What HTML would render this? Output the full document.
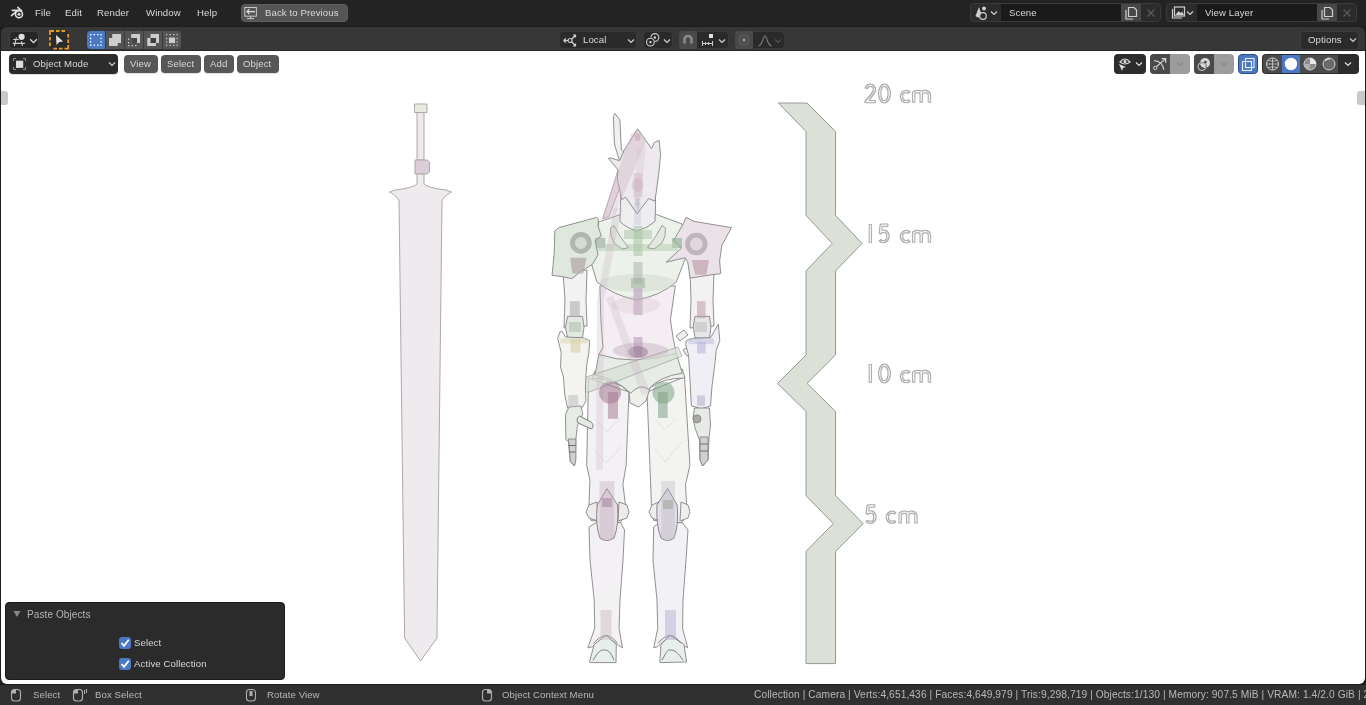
<!DOCTYPE html>
<html><head><meta charset="utf-8">
<style>
*{box-sizing:border-box;margin:0;padding:0}
html,body{width:1366px;height:705px;overflow:hidden;background:#1d1d1d;font-family:"Liberation Sans",sans-serif;font-size:9.6px;letter-spacing:0.1px;color:#d9d9d9;-webkit-font-smoothing:antialiased}
.abs{position:absolute}
#top{left:0;top:0;width:1366px;height:26px;background:#232323}
#hdr{left:1px;top:27px;width:1364px;height:24px;background:#373737;border-radius:6px 6px 0 0}
#vp{left:1px;top:51px;width:1364px;height:633px;background:#ffffff;border-radius:0 0 6px 6px;overflow:hidden}
#status{left:0;top:684px;width:1366px;height:21px;background:#303030;border-top:1px solid #1d1d1d}
.t{position:absolute;white-space:nowrap;line-height:12px;will-change:transform}
.b{position:absolute;border-radius:4px}
svg{position:absolute;overflow:visible}
</style></head><body>
<!-- TOP BAR -->
<div id="top" class="abs">
  <svg style="left:0;top:0" width="30" height="26" viewBox="0 0 30 26">
    <circle cx="19" cy="14.2" r="3.5" fill="none" stroke="#dedede" stroke-width="1.6"/>
    <circle cx="19" cy="14.2" r="1.5" fill="#dedede"/>
    <path d="M12.3 10.4 H19 M17.8 7.4 L21.6 10.9 M11.5 15.6 L15.8 11.9" stroke="#dedede" stroke-width="1.6" fill="none" stroke-linecap="round"/>
  </svg>
  <div class="t" style="left:35px;top:7px">File</div>
  <div class="t" style="left:65px;top:7px">Edit</div>
  <div class="t" style="left:97px;top:7px">Render</div>
  <div class="t" style="left:146px;top:7px">Window</div>
  <div class="t" style="left:197px;top:7px">Help</div>
  <div class="b" style="left:241px;top:3.5px;width:107px;height:18.5px;background:#555555;border:1px solid #5d5d5d"></div>
  <svg style="left:0;top:0" width="270" height="26" viewBox="0 0 270 26">
    <rect x="244.8" y="7.5" width="11.6" height="8.7" fill="none" stroke="#c8c8c8" stroke-width="1"/>
    <path d="M250.6 16.4 V18.2 M247 18.6 H254" stroke="#c8c8c8" stroke-width="1" fill="none"/>
    <path d="M247 11.6 H254.9 M249.4 9.1 L247 11.6 L249.4 14.1" stroke="#e4e4e4" stroke-width="1.1" fill="none"/>
  </svg>
  <div class="t" style="left:265px;top:7px">Back to Previous</div>

  <!-- scene -->
  <div class="b" style="left:970px;top:3px;width:191px;height:19px;background:#2b2b2b;border:1px solid #3a3a3a"></div>
  <div class="abs" style="left:1001px;top:4px;width:120px;height:17px;background:#1a1a1a"></div>
  <div class="abs" style="left:1121px;top:4px;width:20px;height:17px;background:#474747"></div>
  <svg style="left:974px;top:5px" width="18" height="16" viewBox="0 0 18 16">
    <path d="M5 2 L1.5 11 Q5 14 8 11 Z" fill="#cfcfcf"/>
    <circle cx="10" cy="3.5" r="2" fill="#cfcfcf"/>
    <circle cx="9" cy="11" r="3.3" fill="#2b2b2b" stroke="#cfcfcf" stroke-width="1.2"/>
  </svg>
  <svg style="left:990px;top:10px" width="8" height="6" viewBox="0 0 8 6"><path d="M1 1.5 L4 4.5 L7 1.5" stroke="#d0d0d0" stroke-width="1.2" fill="none"/></svg>
  <div class="t" style="left:1009px;top:7px">Scene</div>
  <svg style="left:1124px;top:6px" width="14" height="14" viewBox="0 0 14 14">
    <path d="M4.5 1.5 H10 L12.5 4 V10.5 H4.5 Z M2 4 V13 H9" stroke="#cfcfcf" stroke-width="1.2" fill="none"/>
  </svg>
  <svg style="left:1146px;top:8px" width="10" height="10" viewBox="0 0 10 10"><path d="M1.5 1.5 L8.5 8.5 M8.5 1.5 L1.5 8.5" stroke="#5e5e5e" stroke-width="1.1"/></svg>

  <!-- view layer -->
  <div class="b" style="left:1166px;top:3px;width:191px;height:19px;background:#2b2b2b;border:1px solid #3a3a3a"></div>
  <div class="abs" style="left:1197px;top:4px;width:120px;height:17px;background:#1a1a1a"></div>
  <div class="abs" style="left:1317px;top:4px;width:20px;height:17px;background:#474747"></div>
  <svg style="left:1170px;top:6px" width="16" height="14" viewBox="0 0 16 14">
    <rect x="4.5" y="1" width="10" height="9" fill="none" stroke="#cfcfcf" stroke-width="1.2"/>
    <path d="M2.5 3 V12 H12" stroke="#cfcfcf" stroke-width="1.2" fill="none"/>
    <path d="M5.5 9 L8.5 5 L10.5 7 L12 5.5 L14 9 Z" fill="#cfcfcf"/>
  </svg>
  <svg style="left:1186px;top:10px" width="8" height="6" viewBox="0 0 8 6"><path d="M1 1.5 L4 4.5 L7 1.5" stroke="#d0d0d0" stroke-width="1.2" fill="none"/></svg>
  <div class="t" style="left:1205px;top:7px">View Layer</div>
  <svg style="left:1320px;top:6px" width="14" height="14" viewBox="0 0 14 14">
    <path d="M4.5 1.5 H10 L12.5 4 V10.5 H4.5 Z M2 4 V13 H9" stroke="#cfcfcf" stroke-width="1.2" fill="none"/>
  </svg>
  <svg style="left:1342px;top:8px" width="10" height="10" viewBox="0 0 10 10"><path d="M1.5 1.5 L8.5 8.5 M8.5 1.5 L1.5 8.5" stroke="#5e5e5e" stroke-width="1.1"/></svg>
</div>

<!-- HEADER -->
<div id="hdr" class="abs"></div>
<div class="abs" style="left:1px;top:50px;width:1364px;height:1px;background:#262626"></div>
<div class="abs" style="left:0;top:0;width:1366px;height:51px">
  <!-- editor type -->
  <div class="b" style="left:9px;top:31px;width:30px;height:18px;background:#262626;border:1px solid #3e3e3e"></div>
  <svg style="left:0;top:0" width="40" height="52" viewBox="0 0 40 52">
    <path d="M13.2 39.5 H19 M12.7 43.4 H24.9 M16.4 37.4 L14.4 46.2 M21.4 41.3 L22.4 46" stroke="#cfcfcf" stroke-width="1.1" fill="none"/>
    <circle cx="21.6" cy="36.8" r="3.8" fill="#262626"/>
    <circle cx="21.6" cy="36.8" r="3.1" fill="#dedede"/>
    <path d="M30.2 39.3 L33.5 42.6 L36.9 39.3" stroke="#e0e0e0" stroke-width="1.3" fill="none"/>
  </svg>
  <!-- tool -->
  <svg style="left:0;top:0" width="80" height="52" viewBox="0 0 80 52">
    <rect x="50" y="31" width="18.2" height="17.6" fill="#2b2b2b"/>
    <path d="M50 35 V31 H54 M56 31 H59.5 M61.5 31 H65 M68.2 34 V37.5 M68.2 39.5 V43 M68.2 45 V48.6 H64.5 M62.5 48.6 H59 M57 48.6 H53.5 M50 46 V42.5 M50 40.5 V37" stroke="#e69c20" stroke-width="1.8" fill="none"/>
    <path d="M56 34.9 L63.2 41.6 L59.2 42.1 L56.5 45.1 Z" fill="#e2e2e2"/>
  </svg>
  <!-- select modes -->
  <div class="b" style="left:87px;top:31px;width:94px;height:18px;background:#545454"></div>
  <div class="abs" style="left:87px;top:31px;width:18px;height:18px;background:#4a78c4;border-radius:4px 0 0 4px"></div>
  <div class="abs" style="left:105px;top:31px;width:1px;height:18px;background:#3a3a3a"></div>
  <div class="abs" style="left:124px;top:31px;width:1px;height:18px;background:#3a3a3a"></div>
  <div class="abs" style="left:143px;top:31px;width:1px;height:18px;background:#3a3a3a"></div>
  <div class="abs" style="left:162px;top:31px;width:1px;height:18px;background:#3a3a3a"></div>
  <svg style="left:87px;top:31px" width="94" height="18" viewBox="0 0 94 18">
    <g fill="#ffffff">
      <rect x="3" y="3" width="1.4" height="1.4"/><rect x="6.5" y="3" width="1.6" height="1.2"/><rect x="10" y="3" width="1.6" height="1.2"/><rect x="13.3" y="3" width="1.4" height="1.4"/>
      <rect x="3" y="6.6" width="1.2" height="1.6"/><rect x="3" y="10" width="1.2" height="1.6"/><rect x="13.5" y="6.6" width="1.2" height="1.6"/><rect x="13.5" y="10" width="1.2" height="1.6"/>
      <rect x="3" y="13.4" width="1.4" height="1.4"/><rect x="6.5" y="13.6" width="1.6" height="1.2"/><rect x="10" y="13.6" width="1.6" height="1.2"/><rect x="13.3" y="13.4" width="1.4" height="1.4"/>
    </g>
    <path d="M25.2 3 H34 V12 H30.7 V15 H22 V7 H25.2 Z" fill="#cdcdcd"/>
    <path d="M44.2 3 H53 V12 H44.2 Z" fill="#cdcdcd"/>
    <rect x="44.2" y="7" width="5.8" height="5" fill="#454545"/>
    <g fill="#c8c8c8"><rect x="41" y="7.5" width="1.2" height="1.5"/><rect x="41" y="11" width="1.2" height="1.5"/><rect x="41" y="14" width="1.4" height="1.2"/><rect x="44.5" y="14" width="1.5" height="1.2"/><rect x="48" y="14" width="1.5" height="1.2"/></g>
    <path d="M63.5 3 H72 V12 H69 V15 H60.2 V7 H63.5 Z" fill="#cdcdcd"/>
    <rect x="63.5" y="7" width="5.5" height="5" fill="#3f3f3f"/>
    <g fill="#c8c8c8">
      <rect x="79" y="3" width="1.3" height="1.3"/><rect x="82.5" y="3" width="1.5" height="1.2"/><rect x="86" y="3" width="1.5" height="1.2"/><rect x="89.5" y="3" width="1.3" height="1.3"/>
      <rect x="79" y="6.8" width="1.2" height="1.5"/><rect x="79" y="10.2" width="1.2" height="1.5"/><rect x="89.6" y="6.8" width="1.2" height="1.5"/><rect x="89.6" y="10.2" width="1.2" height="1.5"/>
      <rect x="79" y="13.6" width="1.3" height="1.3"/><rect x="82.5" y="13.7" width="1.5" height="1.2"/><rect x="86" y="13.7" width="1.5" height="1.2"/><rect x="89.5" y="13.6" width="1.3" height="1.3"/>
    </g>
    <rect x="81.9" y="6.5" width="6.2" height="5.6" fill="#cdcdcd"/>
  </svg>

  <!-- Local -->
  <div class="b" style="left:559px;top:31px;width:78px;height:18px;background:#2a2a2a;border:1px solid #393939"></div>
  <svg style="left:562px;top:32px" width="16" height="16" viewBox="0 0 16 16">
    <circle cx="8" cy="8.5" r="2" fill="none" stroke="#cfcfcf" stroke-width="1.2"/>
    <path d="M1.5 8.5 H6 M10 7 L13.5 3 M10 10 L13.5 14 M1.5 8.5 L4 6.5 M1.5 8.5 L4 10.5 M11 3 H13.5 V5.5 M11 14 H13.5 V11.5" stroke="#cfcfcf" stroke-width="1.2" fill="none"/>
  </svg>
  <div class="t" style="left:583px;top:34px">Local</div>
  <svg style="left:627px;top:38px" width="8" height="6" viewBox="0 0 8 6"><path d="M1 1.5 L4 4.5 L7 1.5" stroke="#d0d0d0" stroke-width="1.2" fill="none"/></svg>
  <!-- pivot -->
  <div class="b" style="left:643px;top:31px;width:30px;height:18px;background:#2a2a2a;border:1px solid #393939"></div>
  <svg style="left:0;top:0" width="680" height="52" viewBox="0 0 680 52">
    <circle cx="654.9" cy="37.5" r="3.9" fill="none" stroke="#cfcfcf" stroke-width="1.1"/>
    <circle cx="654.9" cy="37.5" r="1.2" fill="#cfcfcf"/>
    <circle cx="650.4" cy="42.1" r="4.8" fill="#2a2a2a"/>
    <circle cx="650.4" cy="42.1" r="3.9" fill="none" stroke="#cfcfcf" stroke-width="1.1"/>
    <circle cx="650.4" cy="42.1" r="1.2" fill="#cfcfcf"/>
  </svg>
  <svg style="left:663px;top:38px" width="8" height="6" viewBox="0 0 8 6"><path d="M1 1.5 L4 4.5 L7 1.5" stroke="#d0d0d0" stroke-width="1.2" fill="none"/></svg>
  <!-- snap -->
  <div class="b" style="left:679px;top:31px;width:50px;height:18px;background:#2a2a2a;border:1px solid #393939"></div>
  <div class="abs" style="left:679px;top:31px;width:18px;height:18px;background:#4a4a4a;border-radius:4px 0 0 4px"></div>
  <svg style="left:680px;top:32px" width="16" height="16" viewBox="0 0 16 16">
    <path d="M4.5 11.5 V7.5 A3.5 3.5 0 0 1 11.5 7.5 V11.5" stroke="#8a8a8a" stroke-width="2.6" fill="none"/>
  </svg>
  <svg style="left:700px;top:32px" width="16" height="16" viewBox="0 0 16 16">
    <path d="M2 11.5 H13 M2.5 9 V14 M5.5 10 V13 M8.5 10 V13 M12.5 9 V14" stroke="#cfcfcf" stroke-width="1" fill="none"/>
    <rect x="9" y="2" width="4" height="4" fill="#e0e0e0"/>
  </svg>
  <svg style="left:718px;top:38px" width="8" height="6" viewBox="0 0 8 6"><path d="M1 1.5 L4 4.5 L7 1.5" stroke="#d0d0d0" stroke-width="1.2" fill="none"/></svg>
  <!-- proportional -->
  <div class="b" style="left:735px;top:31px;width:50px;height:18px;background:#2a2a2a;border:1px solid #393939"></div>
  <div class="abs" style="left:735px;top:31px;width:18px;height:18px;background:#4a4a4a;border-radius:4px 0 0 4px"></div>
  <svg style="left:736px;top:32px" width="16" height="16" viewBox="0 0 16 16">
    <circle cx="8" cy="8" r="5" fill="none" stroke="#5a5a5a" stroke-width="1.5"/>
    <circle cx="8" cy="8" r="1.8" fill="#8c8c8c"/>
  </svg>
  <svg style="left:757px;top:32px" width="16" height="16" viewBox="0 0 16 16">
    <path d="M1.5 14 Q4.5 13 6.5 6 Q8 1.5 9.5 6 Q11.5 13 14.5 14" stroke="#7a7a7a" stroke-width="1.1" fill="none"/>
  </svg>
  <svg style="left:774px;top:38px" width="8" height="6" viewBox="0 0 8 6"><path d="M1 1.5 L4 4.5 L7 1.5" stroke="#555" stroke-width="1.1" fill="none"/></svg>
  <!-- options -->
  <div class="b" style="left:1300px;top:31px;width:59px;height:19px;background:#2a2a2a;border:1px solid #3c3c3c"></div>
  <div class="t" style="left:1308px;top:34px">Options</div>
  <svg style="left:1348.5px;top:37px" width="8" height="6" viewBox="0 0 8 6"><path d="M1 1.5 L4 4.5 L7 1.5" stroke="#d0d0d0" stroke-width="1.2" fill="none"/></svg>
</div>

<!-- VIEWPORT -->
<div id="vp" class="abs"></div>


<!-- SCENE -->
<svg style="left:0;top:0" width="1366" height="705" viewBox="0 0 1366 705">
  <g stroke="#aaaaaa" stroke-width="1" stroke-linejoin="round">
  <!-- sword -->
  <path d="M414.5 104 H427 V112.5 H414.5 Z" fill="#ebeadf"/>
  <path d="M417 112.5 H424 V160 H417 Z" fill="#efe9ee"/>
  <path d="M415 160 H427 L429.5 162 V172 L427 174 H415 Z" fill="#ddcdd8"/>
  <path d="M417 174 H424 L424 184 Q428 188 446 190 L451.5 192 Q446 194 442 200 L437 630 V638 L420.5 661 L404.5 638 V630 L399 200 Q395 194 389.5 192 L395 190 Q413 188 417 184 Z" fill="#eeeaed"/>
  <!-- ruler -->
  <path d="M778.5 103 H807 L835.5 131.5 V215.3 L862 243.4 L835.5 271 V355 L807 383.4 L835.5 411.4 V495.6 L863.2 523.6 L835.5 551.4 V663.6 H806 V551.4 L833.3 523.6 L806 495.6 V411.4 L777.5 383.4 L806 355 V271 L832.2 243.4 L806 215.3 V131.5 Z" fill="#dce1d8" stroke="#959a91"/>
  </g>

  <!-- CHARACTER -->
  <g stroke="#858585" stroke-width="0.9" stroke-linejoin="round">
    <!-- thighs -->
    <path d="M588.5 378 L629 392 L626.1 465.2 L622.9 484.4 L626.1 509.9 L620.7 522.7 L591 520.5 L588.8 509.9 L589.9 480.1 L586.7 465.2 Z" fill="#f4f1f4"/>
    <path d="M647 392 L684.5 377 L689.9 465.2 L685.6 484.4 L686.7 509.9 L682.4 522.7 L653.7 520.5 L651.6 509.9 L650.5 480.1 Z" fill="#f3f4f2"/>
    <path d="M656.4 420.3 L664.6 430 L675.8 418.8 M655 448 L665 462 L682 442 M596 420 L607 432 L620 418 M594 450 L606 463 L622 446" fill="none" stroke="#dedede" stroke-width="0.9"/>
    <!-- shins -->
    <path d="M589 527 L597 522 L620.7 522.7 L624.5 530 L623 560 L620 600 L619.1 628.5 L622.5 647.8 L618.5 645.6 L606.1 635.4 L592.5 646.7 L587.9 647.8 L594.7 628.5 L594.2 600 L590 560 Z" fill="#f4f1f4"/>
    <path d="M653.7 527 L660 522 L682.4 522.7 L688 530 L686 560 L683 600 L682.6 628.5 L687.7 647.8 L683.5 645.6 L670.1 635.4 L657.5 646.7 L653.7 647.8 L657.7 628.5 L657 600 L653 560 Z" fill="#f2f1f5"/>
    <!-- knee sides -->
    <path d="M589 505 L597 502 L598 521 L589 518 L586 512 Z M619 502 L627 505 L629 512 L627 518 L618 521 Z" fill="#efeaee"/>
    <path d="M652 505 L659 502 L660 521 L652 518 L649 512 Z M681 502 L688 505 L690 512 L688 518 L680 521 Z" fill="#efeff0"/>
    <!-- knee caps -->
    <path d="M607 488.6 L617.6 505 Q619 525 614 538 Q607 543 600 538 Q595 525 597.3 505 Z" fill="#e9dfe6" stroke="#7e7a7e"/>
    <path d="M667.6 488.6 L677.1 505 Q679 525 674 538 Q667.6 543 661 538 Q656 525 656.9 505 Z" fill="#e3dfe9" stroke="#7e7a7e"/>
    <!-- feet -->
    <path d="M589.6 661.4 L594.2 644.4 L606.1 635.4 L616.3 644.4 L616 662.6 L590 662.6 Z" fill="#e8eeec"/>
    <path d="M659.9 661.4 L661 644.4 L670.1 635.4 L684 644.4 L686.6 662 L660 662.6 Z" fill="#e8eeec"/>
    <path d="M593 660.3 Q600 648 604.4 650.1 Q610 649 614 660.3 M593.6 643.3 Q600 636 606.1 635.4 Q612 636 617.4 643.3 M662 660.3 Q668 648 670 650 Q676 649 683 660.3 M658 643.3 Q664 636 670.1 635.4 Q676 636 681 643.3" fill="none" stroke="#74797a"/>
    <!-- pelvis -->
    <path d="M594.9 371 L682.3 369 L685 378 Q662 378 650 388 L646 401 L638.6 407.1 L630 403 L629 392 Q615 379 592 378 Z" fill="#edf0eb"/>
    <!-- abdomen -->
    <path d="M599.9 286 L675.3 286 L670.4 319.7 L673.4 339.6 L676.3 353.5 L677 368 L598 368 L598.9 354.5 L602.9 347.5 L600.9 319.7 Z" fill="#f4eef3"/>
    <!-- belt -->
    <path d="M598.9 354.5 Q633 366 676.3 353.5 L682.3 373.3 Q660 376 648.5 389.2 Q640 383 630.7 393.2 Q615 378 594.9 375.3 Z" fill="#e7ede6"/>
    <!-- scabbard -->
    <g opacity="0.7">
    <path d="M582 389 Q578 381 586 377 L678 347 L682 356 L592 391 Q585 394 582 389 Z" fill="#d8e0d7" stroke="#8f968f"/>
    </g>
    <path d="M676 336 L684 330 L688 335 L680 341 Z M683 350 L692 345 L696 352 L687 356 Z" fill="#eef0ee"/>
    <!-- upper arms -->
    <path d="M563 272 L587 270 L586 300 L587 326 L564 328 L565 300 Z" fill="#f3f1f3"/>
    <path d="M690 272 L714 272 L713 300 L714 326 L690 328 L691 300 Z" fill="#f3f1f3"/>
    <!-- elbows -->
    <path d="M567.6 316.4 H582.5 L584 327 L582.5 337.7 H567.6 L565.5 327 Z" fill="#e3e9e2"/>
    <path d="M695 316.4 H709.5 L711 327 L709.5 338 H695 L693.2 327 Z" fill="#e6e6e8"/>
    <!-- forearms -->
    <path d="M559.8 332 L562 331.3 L565.5 337 L582.5 337.7 L584.7 338.4 L589.6 340.5 L588.9 352.6 L586.8 364 L586 375.3 L585.4 389.5 L586 400.9 L581.8 408 L567.6 408 L564.8 395.2 L563.4 376.8 L560.5 366.8 L561.2 352.6 L557.7 338.4 Z" fill="#f3f3f0"/>
    <path d="M686.4 340.6 L692.8 338.4 L710.5 337.7 L718.4 324.2 L719.8 340.6 L716.2 350.5 L714.8 364.7 L712 386 L710.5 405.9 L701.3 408.8 L691.4 405.9 L690 380.3 L688.5 354.8 L685.7 344.8 Z" fill="#f0eff5"/>
    <!-- hands -->
    <path d="M565.4 414.9 L568.9 407 L580.8 406 L582.8 413.9 L577.4 425.8 L575.9 438.7 L575.4 459.6 L574.4 466 L570.4 461.6 L568.4 441.7 L565.9 439.7 Z" fill="#e6ece5"/>
    <path d="M694.5 408 L709.5 408 L710.5 425 L709 438 L708 460 L702.6 466 L700 460 L699.5 440 L695 428 L693 418 Z" fill="#e6ece5"/>
    <path d="M579.5 416 L591 422 Q595 425.5 591.5 429 L578 423 Q575.5 419 579.5 416 Z" fill="#e3eae2" stroke="#6f746f"/>
    <path d="M568.4 439 H575.9 V460 L574.4 466 L570.4 461.6 Z M700 437 H708 V460 L702.6 466 L700 460 Z" fill="#d3cfd1"/>
    <path d="M568.6 445.5 H575.8 M568.8 452 H575.6 M700.2 444 H707.8 M700.2 451 H707.8" stroke="#6a6a6a" stroke-width="1"/>
    <!-- chest -->
    <path d="M598.6 222 L620.5 214.5 L656.2 214.4 L682 224 L686 256.6 L676.3 282 Q660 296 636.6 299.9 Q615 296 596.9 282 L591.7 264.6 Z" fill="#ecf1ea"/>
    <!-- cape band -->
    <path d="M624.3 150 L634 150 L609 216.3 L602.7 218.9 Z" fill="#ebe2ea" stroke="#aaa2a8"/>
    <!-- shoulder pads -->
    <path d="M554.8 231 L558.8 227.6 L596.8 217.4 L598.5 219.1 L598 225.9 L601.3 236.1 L595.1 240.1 L598 254.8 L592.3 264.5 L580.9 271.3 L571.8 278.7 L564.5 277 L552 275.3 L553.1 264.5 L554.2 253.1 Z" fill="#dfe8dc"/>
    <path d="M686.1 217.4 L694 221.4 L731.5 227.6 L721.9 245.2 L719.6 261.1 L720.7 273.6 L712.2 274.7 L690.1 278.1 L687.8 262.2 L685 257.7 L666.2 262.2 L681.6 248 L673.6 240.6 L682.7 224.8 Z" fill="#ebe1e8"/>
    <!-- neck -->
    <path d="M621 190 L655 190 L655.6 204.8 L655 221.4 Q648 228 637.1 231 Q626 228 619.9 221.4 L620.5 204.8 Z" fill="#eeedf0"/>
    <!-- helmet -->
    <path d="M637.7 128.8 L651.6 148.7 L654.1 142.7 L659.1 140.3 L660.6 154.7 L658.8 173 L655 201 L648.6 198.5 L637.1 213.8 L625.6 197.2 L621.8 199.7 L617.3 179.3 L618 169.8 L608.4 158.3 L611 158 L619.4 160.6 L623.3 151.7 Z" fill="#eee9ec"/>
    <path d="M614.9 113.4 L619.9 119.9 L621.4 150.2 L623.8 151.7 L619.4 160.6 L614.4 143.7 L613.4 116.9 Z" fill="#f1f0ee"/>
    <path d="M631 134 L637.7 129 L646 141 L614 218 L601.5 219.5 Z" fill="#c9b0c4" stroke="none" opacity="0.35"/>
    <path d="M637 150 L646 145 L640 205 L634 205 Z" fill="#d8c8d3" stroke="none" opacity="0.35"/>
  </g>
  <!-- joint markers -->
  <g>
    <!-- shoulder rings -->
    <circle cx="580.9" cy="242.9" r="6.5" fill="#cbd3c9" opacity="0.6"/><circle cx="580.9" cy="242.9" r="8.4" fill="none" stroke="#9ca29b" stroke-width="4.8" opacity="0.7"/>
    <circle cx="696.3" cy="244" r="6.5" fill="#dccdd5" opacity="0.6"/><circle cx="696.3" cy="244" r="8.8" fill="none" stroke="#a89da4" stroke-width="4.8" opacity="0.65"/>
    <path d="M570.1 257.7 H586.6 L583.2 273.6 H572.4 Z" fill="#b4a9a9" opacity="0.75"/>
    <path d="M691.8 260 H708.8 L706.5 274.7 H695.2 Z" fill="#c2a6ae" opacity="0.75"/>
    <rect x="595.7" y="237.8" width="9.6" height="10.2" fill="#9aa59a" opacity="0.6"/>
    <rect x="672" y="238" width="10" height="10" fill="#8fae95" opacity="0.6"/>
    <!-- collar cross -->
    <rect x="598" y="244" width="80" height="7" fill="#b3ccb0" opacity="0.5"/>
    <rect x="633.5" y="226" width="9" height="30" fill="#a9c2a6" opacity="0.55"/>
    <rect x="624" y="230" width="28" height="9" fill="#a6bea3" opacity="0.45"/>
    <path d="M610.5 228 L614 225.5 L620 236 L628.4 247.7 L622 249 L614 243 L611 236 Z M665.5 228 L662 225.5 L656 236 L647.6 247.7 L654 249 L662 243 L665 236 Z" fill="#e2e9df" stroke="#8a908a" stroke-width="0.8"/>
    <!-- abdomen markers -->
    <ellipse cx="638" cy="283" rx="38" ry="9" fill="#c7d2c3" opacity="0.35"/>
    <rect x="633.5" y="262" width="9" height="22" fill="#a9b7a5" opacity="0.55"/>
    <rect x="631" y="278" width="14" height="10" fill="#9fae9a" opacity="0.55"/>
    <rect x="633.5" y="288" width="9" height="27" fill="#b69cb5" opacity="0.6"/>
    <ellipse cx="636" cy="305" rx="24" ry="9" fill="#d6bfd2" opacity="0.3"/>
    <rect x="633.5" y="337" width="9" height="20" fill="#b395b1" opacity="0.55"/>
    <ellipse cx="640.6" cy="350.5" rx="27.8" ry="7.9" fill="#b49ab0" opacity="0.35"/>
    <ellipse cx="638" cy="352" rx="10" ry="6" fill="#8f6a85" opacity="0.45"/>
    <!-- purple long band -->
    <path d="M614 208 L622 208 L604 300 L603 470 L596 470 L597 300 Z" fill="#c5aabf" opacity="0.25"/>
    <path d="M606 298 L613 296 L650 392 L642 396 Z" fill="#c5aabf" opacity="0.25"/>
    <!-- hip joints -->
    <circle cx="610.1" cy="392.6" r="11" fill="#a17a92" opacity="0.55"/>
    <rect x="607.9" y="392" width="10.1" height="26.7" fill="#a57b93" opacity="0.55"/>
    <circle cx="663.5" cy="392.6" r="11" fill="#81a287" opacity="0.55"/>
    <rect x="658" y="392" width="9.6" height="26" fill="#80a087" opacity="0.55"/>
    <!-- arm joints -->
    <rect x="569.9" y="301.2" width="9.9" height="15.6" fill="#b2b0ae" opacity="0.6"/>
    <rect x="697" y="301.2" width="8.5" height="17" fill="#bfa3aa" opacity="0.6"/>
    <rect x="570.5" y="338.4" width="9.9" height="14.2" fill="#cfcba6" opacity="0.55"/>
    <rect x="560.5" y="338.4" width="27" height="5" fill="#d6d3a8" opacity="0.45"/>
    <rect x="697" y="342" width="8.6" height="11.4" fill="#b0b0d8" opacity="0.55"/>
    <rect x="688.5" y="338.4" width="25.5" height="5.7" fill="#b3b3dc" opacity="0.45"/>
    <rect x="568.3" y="395.2" width="10" height="11.4" fill="#bdbdbd" opacity="0.55"/>
    <rect x="697" y="395.3" width="8" height="10.6" fill="#b0b0cc" opacity="0.55"/>
    <rect x="569" y="322" width="12" height="10" fill="#9fb59e" opacity="0.45"/>
    <rect x="695" y="322" width="12" height="10" fill="#b5b5b5" opacity="0.45"/>
    <circle cx="697" cy="418.9" r="4" fill="#a8aaa4" stroke="#7f7f7f" stroke-width="0.8"/>
    <!-- knee markers -->
    <rect x="599.5" y="481.2" width="14.9" height="58" fill="#bda6b8" opacity="0.35"/>
    <rect x="661.2" y="481.2" width="13.8" height="58" fill="#b7b2bd" opacity="0.35"/>
    <rect x="602" y="498" width="10" height="9" fill="#a47d9c" opacity="0.5"/>
    <rect x="663" y="500" width="10" height="9" fill="#98a494" opacity="0.5"/>
    <!-- ankle markers -->
    <rect x="600.5" y="610" width="11" height="30" fill="#c6bdbd" opacity="0.45"/>
    <rect x="665" y="610" width="11" height="30" fill="#b8b0d3" opacity="0.5"/>
    <!-- helmet markers -->
    <rect x="633.5" y="173" width="9" height="24" fill="#c7b2bd" opacity="0.4"/>
    <ellipse cx="637.5" cy="185" rx="6" ry="7" fill="#c8a8b5" opacity="0.35"/>
    <ellipse cx="637.7" cy="137" rx="3" ry="4" fill="#c8aab8" opacity="0.6"/>
    <path d="M635 198 L640 198 L638 212 Z" fill="#9aa0b8" opacity="0.35"/>
    <rect x="634" y="203" width="7" height="22" fill="#a8b4cc" opacity="0.25"/>
  </g>
  <!-- labels -->
  <filter id="olf" x="-20%" y="-20%" width="140%" height="140%">
    <feMorphology in="SourceAlpha" operator="erode" radius="0.75" result="er"/>
    <feComposite in="SourceGraphic" in2="er" operator="out"/>
  </filter>
  <g fill="none" stroke="#f3f3f3" stroke-width="3.4" stroke-linecap="butt" stroke-linejoin="round">
    <path transform="translate(864.2 103.3) scale(1.0 1)" d="M1.9 -14.6 C2.6 -17.2 4.3 -18.1 6.1 -18.1 C8.6 -18.1 10.3 -16.4 10.3 -13.9 C10.3 -11.2 8.3 -8.8 1.7 -1.65 H11.6"/>
    <path transform="translate(878 103.3) scale(1.0 1)" d="M6.45 -18.05 C9.2 -18.05 11.25 -14.5 11.25 -9.85 C11.25 -5.2 9.2 -1.65 6.45 -1.65 C3.7 -1.65 1.65 -5.2 1.65 -9.85 C1.65 -14.5 3.7 -18.05 6.45 -18.05 Z"/>
    <path transform="translate(899.8 103.3) scale(1.0 1)" d="M9.9 -10.4 C8.9 -11.4 7.9 -11.85 6.7 -11.85 C3.8 -11.85 1.65 -9.7 1.65 -6.75 C1.65 -3.8 3.8 -1.65 6.7 -1.65 C7.9 -1.65 8.9 -2.1 9.9 -3.1"/>
    <path transform="translate(912 103.3) scale(1.0 1)" d="M1.65 -0.6 V-11.85 M1.65 -8.3 C1.65 -10.6 3.2 -11.85 5.4 -11.85 C7.6 -11.85 9.25 -10.6 9.25 -8.3 V-0.6 M9.25 -8.3 C9.25 -10.6 10.9 -11.85 13.1 -11.85 C15.4 -11.85 17.45 -10.6 17.45 -8.3 V-0.6"/>
    <path transform="translate(868.2 243.3) scale(1.0 1)" d="M2.15 -19.2 V-0.5"/>
    <path transform="translate(878 243.3) scale(1.0 1)" d="M10.4 -18.05 H3.2 L2.4 -10.6 C3.6 -11.6 4.9 -12 6.1 -12 C8.6 -12 10 -9.7 10 -6.8 C10 -3.7 8.1 -1.65 5.6 -1.65 C3.8 -1.65 2.5 -2.4 1.6 -3.6"/>
    <path transform="translate(899.8 243.3) scale(1.0 1)" d="M9.9 -10.4 C8.9 -11.4 7.9 -11.85 6.7 -11.85 C3.8 -11.85 1.65 -9.7 1.65 -6.75 C1.65 -3.8 3.8 -1.65 6.7 -1.65 C7.9 -1.65 8.9 -2.1 9.9 -3.1"/>
    <path transform="translate(912 243.3) scale(1.0 1)" d="M1.65 -0.6 V-11.85 M1.65 -8.3 C1.65 -10.6 3.2 -11.85 5.4 -11.85 C7.6 -11.85 9.25 -10.6 9.25 -8.3 V-0.6 M9.25 -8.3 C9.25 -10.6 10.9 -11.85 13.1 -11.85 C15.4 -11.85 17.45 -10.6 17.45 -8.3 V-0.6"/>
    <path transform="translate(868.2 383.3) scale(1.0 1)" d="M2.15 -19.2 V-0.5"/>
    <path transform="translate(878 383.3) scale(1.0 1)" d="M6.45 -18.05 C9.2 -18.05 11.25 -14.5 11.25 -9.85 C11.25 -5.2 9.2 -1.65 6.45 -1.65 C3.7 -1.65 1.65 -5.2 1.65 -9.85 C1.65 -14.5 3.7 -18.05 6.45 -18.05 Z"/>
    <path transform="translate(899.8 383.3) scale(1.0 1)" d="M9.9 -10.4 C8.9 -11.4 7.9 -11.85 6.7 -11.85 C3.8 -11.85 1.65 -9.7 1.65 -6.75 C1.65 -3.8 3.8 -1.65 6.7 -1.65 C7.9 -1.65 8.9 -2.1 9.9 -3.1"/>
    <path transform="translate(912 383.3) scale(1.0 1)" d="M1.65 -0.6 V-11.85 M1.65 -8.3 C1.65 -10.6 3.2 -11.85 5.4 -11.85 C7.6 -11.85 9.25 -10.6 9.25 -8.3 V-0.6 M9.25 -8.3 C9.25 -10.6 10.9 -11.85 13.1 -11.85 C15.4 -11.85 17.45 -10.6 17.45 -8.3 V-0.6"/>
    <path transform="translate(864.9 524) scale(1.0 1)" d="M10.4 -18.05 H3.2 L2.4 -10.6 C3.6 -11.6 4.9 -12 6.1 -12 C8.6 -12 10 -9.7 10 -6.8 C10 -3.7 8.1 -1.65 5.6 -1.65 C3.8 -1.65 2.5 -2.4 1.6 -3.6"/>
    <path transform="translate(885.6 524) scale(1.0 1)" d="M9.9 -10.4 C8.9 -11.4 7.9 -11.85 6.7 -11.85 C3.8 -11.85 1.65 -9.7 1.65 -6.75 C1.65 -3.8 3.8 -1.65 6.7 -1.65 C7.9 -1.65 8.9 -2.1 9.9 -3.1"/>
    <path transform="translate(898.5 524) scale(1.0 1)" d="M1.65 -0.6 V-11.85 M1.65 -8.3 C1.65 -10.6 3.2 -11.85 5.4 -11.85 C7.6 -11.85 9.25 -10.6 9.25 -8.3 V-0.6 M9.25 -8.3 C9.25 -10.6 10.9 -11.85 13.1 -11.85 C15.4 -11.85 17.45 -10.6 17.45 -8.3 V-0.6"/>
  </g>
  <g filter="url(#olf)"><g fill="none" stroke="#adadad" stroke-width="3.4" stroke-linecap="butt" stroke-linejoin="round">
    <path transform="translate(864.2 103.3) scale(1.0 1)" d="M1.9 -14.6 C2.6 -17.2 4.3 -18.1 6.1 -18.1 C8.6 -18.1 10.3 -16.4 10.3 -13.9 C10.3 -11.2 8.3 -8.8 1.7 -1.65 H11.6"/>
    <path transform="translate(878 103.3) scale(1.0 1)" d="M6.45 -18.05 C9.2 -18.05 11.25 -14.5 11.25 -9.85 C11.25 -5.2 9.2 -1.65 6.45 -1.65 C3.7 -1.65 1.65 -5.2 1.65 -9.85 C1.65 -14.5 3.7 -18.05 6.45 -18.05 Z"/>
    <path transform="translate(899.8 103.3) scale(1.0 1)" d="M9.9 -10.4 C8.9 -11.4 7.9 -11.85 6.7 -11.85 C3.8 -11.85 1.65 -9.7 1.65 -6.75 C1.65 -3.8 3.8 -1.65 6.7 -1.65 C7.9 -1.65 8.9 -2.1 9.9 -3.1"/>
    <path transform="translate(912 103.3) scale(1.0 1)" d="M1.65 -0.6 V-11.85 M1.65 -8.3 C1.65 -10.6 3.2 -11.85 5.4 -11.85 C7.6 -11.85 9.25 -10.6 9.25 -8.3 V-0.6 M9.25 -8.3 C9.25 -10.6 10.9 -11.85 13.1 -11.85 C15.4 -11.85 17.45 -10.6 17.45 -8.3 V-0.6"/>
    <path transform="translate(868.2 243.3) scale(1.0 1)" d="M2.15 -19.2 V-0.5"/>
    <path transform="translate(878 243.3) scale(1.0 1)" d="M10.4 -18.05 H3.2 L2.4 -10.6 C3.6 -11.6 4.9 -12 6.1 -12 C8.6 -12 10 -9.7 10 -6.8 C10 -3.7 8.1 -1.65 5.6 -1.65 C3.8 -1.65 2.5 -2.4 1.6 -3.6"/>
    <path transform="translate(899.8 243.3) scale(1.0 1)" d="M9.9 -10.4 C8.9 -11.4 7.9 -11.85 6.7 -11.85 C3.8 -11.85 1.65 -9.7 1.65 -6.75 C1.65 -3.8 3.8 -1.65 6.7 -1.65 C7.9 -1.65 8.9 -2.1 9.9 -3.1"/>
    <path transform="translate(912 243.3) scale(1.0 1)" d="M1.65 -0.6 V-11.85 M1.65 -8.3 C1.65 -10.6 3.2 -11.85 5.4 -11.85 C7.6 -11.85 9.25 -10.6 9.25 -8.3 V-0.6 M9.25 -8.3 C9.25 -10.6 10.9 -11.85 13.1 -11.85 C15.4 -11.85 17.45 -10.6 17.45 -8.3 V-0.6"/>
    <path transform="translate(868.2 383.3) scale(1.0 1)" d="M2.15 -19.2 V-0.5"/>
    <path transform="translate(878 383.3) scale(1.0 1)" d="M6.45 -18.05 C9.2 -18.05 11.25 -14.5 11.25 -9.85 C11.25 -5.2 9.2 -1.65 6.45 -1.65 C3.7 -1.65 1.65 -5.2 1.65 -9.85 C1.65 -14.5 3.7 -18.05 6.45 -18.05 Z"/>
    <path transform="translate(899.8 383.3) scale(1.0 1)" d="M9.9 -10.4 C8.9 -11.4 7.9 -11.85 6.7 -11.85 C3.8 -11.85 1.65 -9.7 1.65 -6.75 C1.65 -3.8 3.8 -1.65 6.7 -1.65 C7.9 -1.65 8.9 -2.1 9.9 -3.1"/>
    <path transform="translate(912 383.3) scale(1.0 1)" d="M1.65 -0.6 V-11.85 M1.65 -8.3 C1.65 -10.6 3.2 -11.85 5.4 -11.85 C7.6 -11.85 9.25 -10.6 9.25 -8.3 V-0.6 M9.25 -8.3 C9.25 -10.6 10.9 -11.85 13.1 -11.85 C15.4 -11.85 17.45 -10.6 17.45 -8.3 V-0.6"/>
    <path transform="translate(864.9 524) scale(1.0 1)" d="M10.4 -18.05 H3.2 L2.4 -10.6 C3.6 -11.6 4.9 -12 6.1 -12 C8.6 -12 10 -9.7 10 -6.8 C10 -3.7 8.1 -1.65 5.6 -1.65 C3.8 -1.65 2.5 -2.4 1.6 -3.6"/>
    <path transform="translate(885.6 524) scale(1.0 1)" d="M9.9 -10.4 C8.9 -11.4 7.9 -11.85 6.7 -11.85 C3.8 -11.85 1.65 -9.7 1.65 -6.75 C1.65 -3.8 3.8 -1.65 6.7 -1.65 C7.9 -1.65 8.9 -2.1 9.9 -3.1"/>
    <path transform="translate(898.5 524) scale(1.0 1)" d="M1.65 -0.6 V-11.85 M1.65 -8.3 C1.65 -10.6 3.2 -11.85 5.4 -11.85 C7.6 -11.85 9.25 -10.6 9.25 -8.3 V-0.6 M9.25 -8.3 C9.25 -10.6 10.9 -11.85 13.1 -11.85 C15.4 -11.85 17.45 -10.6 17.45 -8.3 V-0.6"/>
  </g></g>
</svg>


<!-- VIEWPORT UI -->
<div class="abs" style="left:0;top:0;width:1366px;height:705px">
  <!-- region tabs -->
  <div class="abs" style="left:1px;top:91px;width:7px;height:14px;background:#c9c9c9;border-radius:0 3px 3px 0"></div>
  <div class="abs" style="left:1357px;top:91px;width:8px;height:14px;background:#c9c9c9;border-radius:3px 0 0 3px"></div>
  <!-- object mode -->
  <div class="b" style="left:9px;top:54px;width:109px;height:20px;background:#2c2c2c;box-shadow:0 1px 1px rgba(0,0,0,0.15)"></div>
  <svg style="left:13px;top:58px" width="13" height="12" viewBox="0 0 13 12">
    <path d="M0.5 3 V0.5 H3 M10 0.5 H12.5 V3 M12.5 9 V11.5 H10 M3 11.5 H0.5 V9" stroke="#8e8e8e" stroke-width="1" fill="none"/>
    <rect x="3" y="2.7" width="7.2" height="7.2" fill="#dedede"/>
  </svg>
  <div class="t" style="left:33px;top:58px">Object Mode</div>
  <svg style="left:108px;top:61px" width="8" height="6" viewBox="0 0 8 6"><path d="M1 1.5 L4 4.5 L7 1.5" stroke="#d0d0d0" stroke-width="1.2" fill="none"/></svg>
  <!-- menus -->
  <div class="b" style="left:124px;top:55px;width:34px;height:18px;background:#575757;box-shadow:0 1px 1px rgba(0,0,0,0.12)"></div>
  <div class="t" style="left:130px;top:58px">View</div>
  <div class="b" style="left:161px;top:55px;width:40px;height:18px;background:#575757;box-shadow:0 1px 1px rgba(0,0,0,0.12)"></div>
  <div class="t" style="left:167px;top:58px">Select</div>
  <div class="b" style="left:204px;top:55px;width:30px;height:18px;background:#575757;box-shadow:0 1px 1px rgba(0,0,0,0.12)"></div>
  <div class="t" style="left:210px;top:58px">Add</div>
  <div class="b" style="left:237px;top:55px;width:42px;height:18px;background:#575757;box-shadow:0 1px 1px rgba(0,0,0,0.12)"></div>
  <div class="t" style="left:243px;top:58px">Object</div>

  <!-- right side tools -->
  <div class="b" style="left:1114px;top:54px;width:32px;height:20px;background:#2c2c2c"></div>
  <svg style="left:1116px;top:55px" width="18" height="18" viewBox="0 0 18 18">
    <path d="M4 7 Q9 1 14 7 Q9 11 4 7 Z" fill="none" stroke="#dcdcdc" stroke-width="1.2"/>
    <circle cx="9" cy="6.5" r="1.6" fill="#dcdcdc"/>
    <path d="M3 9 L10 12 L7 13 L6 16 Z" fill="#dcdcdc"/>
  </svg>
  <svg style="left:1135px;top:61px" width="8" height="6" viewBox="0 0 8 6"><path d="M1 1.5 L4 4.5 L7 1.5" stroke="#e0e0e0" stroke-width="1.2" fill="none"/></svg>

  <div class="b" style="left:1150px;top:54px;width:40px;height:20px;background:#9c9c9c"></div>
  <div class="abs" style="left:1150px;top:54px;width:20px;height:20px;background:#4a4a4a;border-radius:4px 0 0 4px"></div>
  <svg style="left:1152px;top:56px" width="16" height="16" viewBox="0 0 16 16">
    <path d="M2 4.6 Q10.5 5 11.8 13.8" stroke="#c8c8c8" stroke-width="1.1" fill="none"/>
    <path d="M4.2 10.9 L13.3 2.9 M9.6 2.7 H13.6 V6.7" stroke="#d8d8d8" stroke-width="1.2" fill="none"/>
    <circle cx="3.2" cy="12" r="1.7" fill="#4a4a4a" stroke="#d0d0d0" stroke-width="1"/>
  </svg>
  <svg style="left:1176px;top:61px" width="8" height="6" viewBox="0 0 8 6"><path d="M1 1.5 L4 4.5 L7 1.5" stroke="#8a8a8a" stroke-width="1.1" fill="none"/></svg>

  <div class="b" style="left:1194px;top:54px;width:40px;height:20px;background:#9c9c9c"></div>
  <div class="abs" style="left:1194px;top:54px;width:20px;height:20px;background:#4a4a4a;border-radius:4px 0 0 4px"></div>
  <svg style="left:1196px;top:56px" width="16" height="16" viewBox="0 0 16 16">
    <circle cx="9" cy="7" r="5" fill="#d8d8d8"/>
    <circle cx="6" cy="10.5" r="4" fill="none" stroke="#4a4a4a" stroke-width="1.6"/>
    <circle cx="6" cy="10.5" r="4" fill="none" stroke="#cfcfcf" stroke-width="1"/>
    <circle cx="9.5" cy="6" r="1.3" fill="#4a4a4a"/>
  </svg>
  <svg style="left:1220px;top:61px" width="8" height="6" viewBox="0 0 8 6"><path d="M1 1.5 L4 4.5 L7 1.5" stroke="#8a8a8a" stroke-width="1.1" fill="none"/></svg>

  <div class="b" style="left:1238px;top:54px;width:20px;height:20px;background:#4a78c4;border:1px solid #2a4a7a"></div>
  <svg style="left:1238px;top:54px" width="20" height="20" viewBox="0 0 20 20">
    <rect x="7.5" y="4.5" width="8.5" height="9" fill="none" stroke="#e8eefa" stroke-width="1.1"/>
    <rect x="4.5" y="7.5" width="9" height="9" fill="none" stroke="#e8eefa" stroke-width="1.1"/>
    <rect x="7" y="10.5" width="1.2" height="1.2" fill="#e8eefa"/><rect x="9.5" y="13" width="1.2" height="1.2" fill="#e8eefa"/>
  </svg>

  <div class="b" style="left:1262px;top:54px;width:97px;height:20px;background:#2c2c2c"></div>
  <div class="abs" style="left:1263px;top:55px;width:19px;height:18px;background:#4a4a4a;border-radius:3px 0 0 3px"></div>
  <div class="abs" style="left:1282px;top:55px;width:18px;height:18px;background:#4a78c4"></div>
  <div class="abs" style="left:1300px;top:55px;width:19px;height:18px;background:#4a4a4a"></div>
  <div class="abs" style="left:1319px;top:55px;width:19px;height:18px;background:#4a4a4a"></div>
  <svg style="left:1263px;top:55px" width="96" height="18" viewBox="0 0 96 18">
    <circle cx="9.5" cy="9" r="6" fill="none" stroke="#cfcfcf" stroke-width="1"/>
    <path d="M3.5 9 H15.5 M9.5 3 V15 M5 5.5 Q9.5 7 14 5.5 M5 12.5 Q9.5 11 14 12.5" stroke="#cfcfcf" stroke-width="0.8" fill="none"/>
    <circle cx="28" cy="9" r="6.2" fill="#ffffff"/>
    <circle cx="47" cy="9" r="6" fill="#8c8c8c" stroke="#d0d0d0" stroke-width="1"/>
    <path d="M47 3 A6 6 0 0 1 53 9 H47 Z" fill="#e8e8e8"/>
    <path d="M47 9 V15 A6 6 0 0 1 41 9 Z" fill="#b0b0b0"/>
    <circle cx="66" cy="9" r="6" fill="#6a6a6a" stroke="#cfcfcf" stroke-width="1"/>
    <path d="M62 6 Q64 3.5 67 4" stroke="#e0e0e0" stroke-width="1.2" fill="none"/>
    <path d="M82 7.5 L85 10.5 L88 7.5" stroke="#e0e0e0" stroke-width="1.2" fill="none"/>
  </svg>

  <!-- Paste Objects panel -->
  <div class="b" style="left:5px;top:602px;width:280px;height:78px;background:#2b2b2b;border:1px solid #1a1a1a"></div>
  <svg style="left:13px;top:610px" width="8" height="8" viewBox="0 0 8 8"><path d="M0.5 1 H7.5 L4 7 Z" fill="#8a8a8a"/></svg>
  <div class="t" style="left:27px;top:609px;color:#b5b5b5;font-size:10px">Paste Objects</div>
  <div class="b" style="left:119px;top:637px;width:12px;height:12px;background:#4a78c4;border-radius:3px"></div>
  <svg style="left:119px;top:637px" width="12" height="12" viewBox="0 0 12 12"><path d="M2.5 6 L5 8.8 L9.8 2.8" stroke="#fff" stroke-width="1.8" fill="none"/></svg>
  <div class="t" style="left:134px;top:637px">Select</div>
  <div class="b" style="left:119px;top:658px;width:12px;height:12px;background:#4a78c4;border-radius:3px"></div>
  <svg style="left:119px;top:658px" width="12" height="12" viewBox="0 0 12 12"><path d="M2.5 6 L5 8.8 L9.8 2.8" stroke="#fff" stroke-width="1.8" fill="none"/></svg>
  <div class="t" style="left:134px;top:658px">Active Collection</div>
</div>

<!-- STATUS -->
<div id="status" class="abs">
  
  <svg style="left:10px;top:3px;position:absolute" width="12" height="14" viewBox="0 0 12 14">
    <rect x="1.5" y="1.5" width="9" height="11.5" rx="3" fill="none" stroke="#b0b0b0" stroke-width="1.1"/>
    <path d="M1.5 5.5 H6 V1.5 H4.5 A3 3 0 0 0 1.5 4.5 Z" fill="#b0b0b0"/>
  </svg>
  <svg style="left:72px;top:3px;position:absolute" width="16" height="14" viewBox="0 0 16 14">
    <rect x="1.5" y="1.5" width="9" height="11.5" rx="3" fill="none" stroke="#b0b0b0" stroke-width="1.1"/>
    <path d="M1.5 5.5 H6 V1.5 H4.5 A3 3 0 0 0 1.5 4.5 Z" fill="#b0b0b0"/>
    <path d="M12.5 2 V6 M14.5 1 V5" stroke="#b0b0b0" stroke-width="1"/>
  </svg>
  <svg style="left:245px;top:3px;position:absolute" width="12" height="14" viewBox="0 0 12 14">
    <rect x="1.5" y="1.5" width="9" height="11.5" rx="3" fill="none" stroke="#b0b0b0" stroke-width="1.1"/>
    <rect x="4.5" y="3" width="3" height="5" fill="#b0b0b0"/>
  </svg>
  <svg style="left:481px;top:3px;position:absolute" width="12" height="14" viewBox="0 0 12 14">
    <rect x="1.5" y="1.5" width="9" height="11.5" rx="3" fill="none" stroke="#b0b0b0" stroke-width="1.1"/>
    <path d="M10.5 5.5 H6 V1.5 H7.5 A3 3 0 0 1 10.5 4.5 Z" fill="#b0b0b0"/>
  </svg>
  <div class="t" style="left:33px;top:4px;color:#b8b8b8">Select</div>
  <div class="t" style="left:95px;top:4px;color:#b8b8b8">Box Select</div>
  <div class="t" style="left:267px;top:4px;color:#b8b8b8">Rotate View</div>
  <div class="t" style="left:502px;top:4px;color:#b8b8b8">Object Context Menu</div>
  <div class="t" style="left:754px;top:4px;color:#b8b8b8;font-size:10.2px;letter-spacing:0.1px">Collection | Camera | Verts:4,651,436 | Faces:4,649,979 | Tris:9,298,719 | Objects:1/130 | Memory: 907.5 MiB | VRAM: 1.4/2.0 GiB | 2</div>
</div>
</body></html>
